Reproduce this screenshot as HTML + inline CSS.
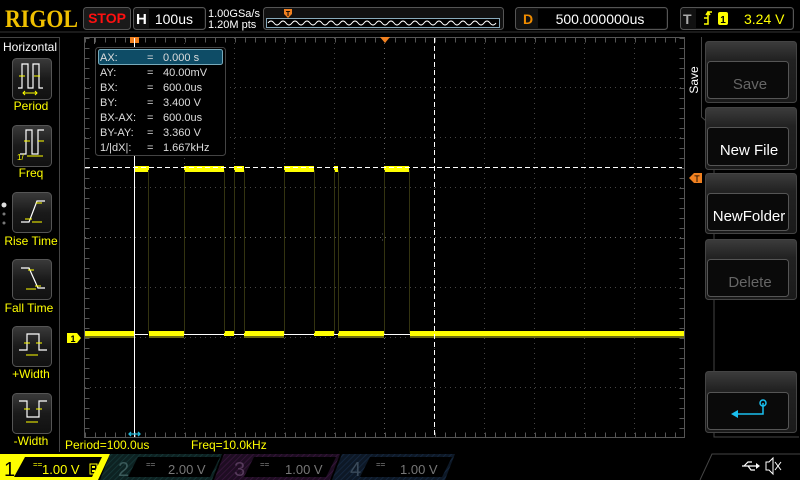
<!DOCTYPE html>
<html><head><meta charset="utf-8"><style>
body{margin:0;background:#000;width:800px;height:480px;overflow:hidden;font-family:"Liberation Sans",sans-serif;}
svg{display:block}
</style></head><body>
<svg width="800" height="480" xmlns="http://www.w3.org/2000/svg" font-family="Liberation Sans, sans-serif">
<rect width="800" height="480" fill="#000"/>
<defs>
<linearGradient id="btn" x1="0" y1="0" x2="0" y2="1"><stop offset="0" stop-color="#3a3a3a"/><stop offset="0.5" stop-color="#1a1a1a"/><stop offset="1" stop-color="#111"/></linearGradient>
<linearGradient id="sk" x1="0" y1="0" x2="0" y2="1"><stop offset="0" stop-color="#3c3c3c"/><stop offset="0.3" stop-color="#222"/><stop offset="1" stop-color="#1a1a1a"/></linearGradient>
<pattern id="hatch2" width="4" height="4" patternUnits="userSpaceOnUse" patternTransform="rotate(45)"><rect width="4" height="4" fill="#0d2222"/><line x1="0" y1="0" x2="0" y2="4" stroke="#163a3a" stroke-width="1.5"/></pattern>
<pattern id="hatch3" width="4" height="4" patternUnits="userSpaceOnUse" patternTransform="rotate(45)"><rect width="4" height="4" fill="#1e0d22"/><line x1="0" y1="0" x2="0" y2="4" stroke="#3a163e" stroke-width="1.5"/></pattern>
<pattern id="hatch4" width="4" height="4" patternUnits="userSpaceOnUse" patternTransform="rotate(45)"><rect width="4" height="4" fill="#0d1826"/><line x1="0" y1="0" x2="0" y2="4" stroke="#162a44" stroke-width="1.5"/></pattern>
</defs>

<!-- top bar -->
<line x1="0" y1="32" x2="800" y2="32" stroke="#333" stroke-width="1"/>
<text x="5" y="27" font-family="Liberation Serif, serif" font-weight="bold" font-size="25" fill="#f0c000" textLength="73" lengthAdjust="spacingAndGlyphs">RIGOL</text>
<rect x="83.5" y="7.5" width="47" height="22" rx="3" fill="#1a1a1a" stroke="#555"/>
<text x="107" y="23" text-anchor="middle" font-size="14" font-weight="bold" fill="#ff1010">STOP</text>
<rect x="133.5" y="7.5" width="72" height="22" rx="3" fill="#111" stroke="#555"/>
<rect x="149" y="9" width="55" height="19" fill="#000"/>
<text x="136" y="24" font-size="15" font-weight="bold" fill="#fff">H</text>
<text x="193" y="24" text-anchor="end" font-size="14" fill="#fff">100us</text>
<text x="208" y="17" font-size="11" fill="#fff">1.00GSa/s</text>
<text x="208" y="28" font-size="11" fill="#fff">1.20M pts</text>
<rect x="263.5" y="7.5" width="240" height="22" rx="3" fill="#111" stroke="#555"/>
<rect x="266.5" y="18.5" width="233" height="9" fill="#000" stroke="#8ab"/>
<path d="M268 23 q3 -4 6 0 t6 0 t6 0 t6 0 t6 0 t6 0 t6 0 t6 0 t6 0 t6 0 t6 0 t6 0 t6 0 t6 0 t6 0 t6 0 t6 0 t6 0 t6 0 t6 0 t6 0 t6 0 t6 0 t6 0 t6 0 t6 0 t6 0 t6 0 t6 0 t6 0 t6 0 t6 0 t6 0 t6 0 t6 0 t6 0 t6 0 t6 0" fill="none" stroke="#fff" stroke-width="1"/>
<path d="M284 9 h8 v5 l-4 4 l-4 -4z" fill="#f08020"/>
<text x="288" y="16" text-anchor="middle" font-size="7" fill="#000" font-weight="bold">T</text>
<rect x="515.5" y="7.5" width="152" height="22" rx="3" fill="#111" stroke="#555"/>
<rect x="538" y="9" width="128" height="19" fill="#000"/>
<text x="523" y="24" font-size="14" font-weight="bold" fill="#f08c00">D</text>
<text x="600" y="24" text-anchor="middle" font-size="14" fill="#fff">500.000000us</text>
<rect x="680.5" y="7.5" width="113" height="22" rx="3" fill="#111" stroke="#555"/>
<rect x="696" y="9" width="96" height="19" fill="#000"/>
<text x="683" y="24" font-size="14" font-weight="bold" fill="#aaa">T</text>
<path d="M704 18 h4 v-6 h4 M706 15 l2 -3 l2 3 M708 18 v6 h-4" fill="none" stroke="#ff0" stroke-width="1.5"/>
<rect x="718" y="12" width="10" height="13" rx="2" fill="#ff0"/>
<text x="723" y="23" text-anchor="middle" font-size="10" font-weight="bold" fill="#000">1</text>
<text x="744" y="24" font-size="14" fill="#ff0">3.24 V</text>

<!-- left panel -->
<path d="M0 37.5 H59.5 V452" fill="none" stroke="#444"/>
<text x="30" y="51" text-anchor="middle" font-size="12" fill="#fff">Horizontal</text>
<g>
<rect x="12.5" y="58.5" width="39" height="41" rx="4" fill="url(#btn)" stroke="#555"/>
<path d="M18 88 h4 v-24 h6 v24 h5 v-24 h6 v24 h4" fill="none" stroke="#fff" stroke-width="1.2"/>
<path d="M19 76 h6 M34 76 h6" stroke="#ff0"/><path d="M23 93 h14 M25 91 l-2 2 2 2 M35 91 l2 2 -2 2" stroke="#ff0" fill="none"/>
<text x="31" y="110" text-anchor="middle" font-size="12" fill="#ff0">Period</text>
<rect x="12.5" y="125.5" width="39" height="41" rx="4" fill="url(#btn)" stroke="#555"/>
<path d="M20 154 h6 v-24 h6 v24 h6 v-24 h6" fill="none" stroke="#fff" stroke-width="1.2"/>
<path d="M24 141 h6 M38 141 h6" stroke="#ff0"/><path d="M27 156 h16" stroke="#ff0"/><text x="17" y="160" font-size="8" fill="#ff0">1/</text>
<text x="31" y="177" text-anchor="middle" font-size="12" fill="#ff0">Freq</text>
<circle cx="4" cy="205" r="2.5" fill="#ddd"/><circle cx="4" cy="214" r="1.5" fill="#777"/><circle cx="4" cy="223" r="1.5" fill="#777"/>
<rect x="12.5" y="192.5" width="39" height="40" rx="4" fill="url(#btn)" stroke="#555"/>
<path d="M21 222 h8 l8 -21 h8" fill="none" stroke="#fff" stroke-width="1.2"/>
<path d="M25 219 h7 M36 203 h6 M32 222 h10" stroke="#ff0"/>
<text x="31" y="245" text-anchor="middle" font-size="12" fill="#ff0">Rise Time</text>
<rect x="12.5" y="259.5" width="39" height="40" rx="4" fill="url(#btn)" stroke="#555"/>
<path d="M21 268 h8 l9 20 h7" fill="none" stroke="#fff" stroke-width="1.2"/>
<path d="M28 270 h6 M35 286 h6 M26 289 h10" stroke="#ff0"/>
<text x="29" y="312" text-anchor="middle" font-size="12" fill="#ff0">Fall Time</text>
<rect x="12.5" y="326.5" width="39" height="40" rx="4" fill="url(#btn)" stroke="#555"/>
<path d="M19 350 h8 v-16 h12 v16 h8" fill="none" stroke="#fff" stroke-width="1.2"/>
<path d="M24 343 h6 M36 343 h6 M26 355 h12" stroke="#ff0"/>
<text x="31" y="378" text-anchor="middle" font-size="12" fill="#ff0">+Width</text>
<rect x="12.5" y="393.5" width="39" height="40" rx="4" fill="url(#btn)" stroke="#555"/>
<path d="M19 401 h8 v16 h12 v-16 h8" fill="none" stroke="#fff" stroke-width="1.2"/>
<path d="M24 409 h6 M36 409 h6 M26 422 h12" stroke="#ff0"/>
<text x="31" y="445" text-anchor="middle" font-size="12" fill="#ff0">-Width</text>
</g>

<!-- grid -->
<rect x="84.5" y="37.5" width="600" height="400" fill="none" stroke="#555"/>
<g stroke="#444" stroke-dasharray="1,4">
<line x1="134.5" y1="38" x2="134.5" y2="437"/><line x1="184.5" y1="38" x2="184.5" y2="437"/><line x1="234.5" y1="38" x2="234.5" y2="437"/><line x1="284.5" y1="38" x2="284.5" y2="437"/><line x1="334.5" y1="38" x2="334.5" y2="437"/><line x1="434.5" y1="38" x2="434.5" y2="437"/><line x1="484.5" y1="38" x2="484.5" y2="437"/><line x1="534.5" y1="38" x2="534.5" y2="437"/><line x1="584.5" y1="38" x2="584.5" y2="437"/><line x1="634.5" y1="38" x2="634.5" y2="437"/>
<line x1="85" y1="87.5" x2="684" y2="87.5"/><line x1="85" y1="137.5" x2="684" y2="137.5"/><line x1="85" y1="187.5" x2="684" y2="187.5"/><line x1="85" y1="287.5" x2="684" y2="287.5"/><line x1="85" y1="337.5" x2="684" y2="337.5"/><line x1="85" y1="387.5" x2="684" y2="387.5"/>
</g>
<g stroke="#666" stroke-dasharray="1,9">
<line x1="384.5" y1="38" x2="384.5" y2="437" stroke-dasharray="1,4"/>
<line x1="85" y1="237.5" x2="684" y2="237.5" stroke-dasharray="1,4"/>
<line x1="94.5" y1="38" x2="94.5" y2="44" stroke-dasharray="none"/>
</g>
<!-- ticks -->
<path d="M85 40 H684 M85 435 H684" stroke="#555" stroke-dasharray="1,9" stroke-width="5"/>
<path d="M87 38 V437 M682 38 V437" stroke="#555" stroke-dasharray="1,9" stroke-width="5"/>
<path d="M382 234 H388 M382 240 H388" stroke="#666" stroke-dasharray="1,9" stroke-width="1"/>
<path d="M380 37 h10 l-5 6z" fill="#f08020"/>
<rect x="130" y="37" width="9" height="6" fill="#f08020"/>

<!-- waveform -->
<g fill="#ffff00">
<rect x="85" y="331" width="49" height="5"/>
<rect x="135" y="166" width="14" height="6"/><rect x="149" y="331" width="35" height="5"/>
<rect x="184" y="166" width="40" height="6"/><rect x="224" y="331" width="10" height="5"/>
<rect x="234" y="166" width="10" height="6"/><rect x="244" y="331" width="40" height="5"/>
<rect x="284" y="166" width="30" height="6"/><rect x="314" y="331" width="20" height="5"/>
<rect x="334" y="166" width="4" height="6"/><rect x="338" y="331" width="46" height="5"/>
<rect x="384" y="166" width="25" height="6"/><rect x="410" y="331" width="274" height="5"/>
</g>
<g fill="#6a6a10"><rect x="85" y="336" width="49" height="2"/><rect x="149" y="336" width="35" height="2"/><rect x="244" y="336" width="40" height="2"/><rect x="338" y="336" width="46" height="2"/><rect x="410" y="336" width="274" height="2"/></g>
<g stroke="#333310" stroke-width="1"><path d="M148.5 170V333 M184.5 170V333 M224.5 170V333 M234.5 170V333 M244.5 170V333 M284.5 170V333 M314.5 170V333 M334.5 170V333 M338.5 170V333 M384.5 170V333 M409.5 170V333"/></g>
<!-- cursors -->
<line x1="85" y1="167.5" x2="684" y2="167.5" stroke="#fff" stroke-dasharray="5,3"/>
<line x1="134.5" y1="38" x2="134.5" y2="437" stroke="#fff"/>
<line x1="434.5" y1="38" x2="434.5" y2="437" stroke="#fff" stroke-dasharray="5,3"/>
<path d="M134 334.5 H148 M184 334.5 H224 M234 334.5 H244 M284 334.5 H314 M334 334.5 H338 M384 334.5 H410" stroke="#fff"/>
<path d="M129 434 h11 M131 432 l-2 2 2 2 M138 432 l2 2 -2 2" stroke="#2bd" fill="none" stroke-width="1.3"/>
<path d="M67 333 h10 l4 5 l-4 5 h-10z" fill="#ff0"/><text x="73" y="342" text-anchor="middle" font-size="9" font-weight="bold" fill="#000">1</text>
<path d="M694 173 h8 v10 h-8 l-5 -5z" fill="#f08020"/><text x="697" y="182" text-anchor="middle" font-size="9" fill="#000">T</text>

<!-- cursor table -->
<rect x="95.5" y="47.5" width="130" height="108" rx="3" fill="#000" stroke="#444"/>
<rect x="98.5" y="49.5" width="124" height="15" rx="2" fill="#0e4c66" stroke="#7ab"/>
<g font-size="11" fill="#ddd">
<text x="100" y="61">AX:</text><text x="147" y="61">=</text><text x="163" y="61">0.000 s</text>
<text x="100" y="76">AY:</text><text x="147" y="76">=</text><text x="163" y="76">40.00mV</text>
<text x="100" y="91">BX:</text><text x="147" y="91">=</text><text x="163" y="91">600.0us</text>
<text x="100" y="106">BY:</text><text x="147" y="106">=</text><text x="163" y="106">3.400 V</text>
<text x="100" y="121">BX-AX:</text><text x="147" y="121">=</text><text x="163" y="121">600.0us</text>
<text x="100" y="136">BY-AY:</text><text x="147" y="136">=</text><text x="163" y="136">3.360 V</text>
<text x="100" y="151">1/|dX|:</text><text x="147" y="151">=</text><text x="163" y="151">1.667kHz</text>
</g>

<!-- measurements -->
<text x="65" y="449" font-size="12" fill="#ff0">Period=100.0us</text>
<text x="191" y="449" font-size="12" fill="#ff0">Freq=10.0kHz</text>

<!-- right panel -->
<path d="M701.5 37 V117 L714 128 V437 H799" fill="none" stroke="#444"/>
<text transform="translate(698,80) rotate(-90)" text-anchor="middle" font-size="12" fill="#fff">Save</text>
<g>
<rect x="705.5" y="41.5" width="91" height="61" rx="3" fill="url(#sk)" stroke="#444"/><rect x="707.5" y="61.5" width="81" height="37" rx="3" fill="#0a0a0a" stroke="#555"/>
<text x="750" y="89" text-anchor="middle" font-size="15" fill="#666">Save</text>
<rect x="705.5" y="107.5" width="91" height="62" rx="3" fill="url(#sk)" stroke="#444"/><rect x="707.5" y="127.5" width="81" height="38" rx="3" fill="#0a0a0a" stroke="#555"/>
<text x="749" y="155" text-anchor="middle" font-size="15" fill="#fff">New File</text>
<rect x="705.5" y="173.5" width="91" height="60" rx="3" fill="url(#sk)" stroke="#444"/><rect x="707.5" y="193.5" width="81" height="37" rx="3" fill="#0a0a0a" stroke="#555"/>
<text x="749" y="221" text-anchor="middle" font-size="15" fill="#fff">NewFolder</text>
<rect x="705.5" y="239.5" width="91" height="60" rx="3" fill="url(#sk)" stroke="#444"/><rect x="707.5" y="259.5" width="81" height="37" rx="3" fill="#0a0a0a" stroke="#555"/>
<text x="750" y="287" text-anchor="middle" font-size="15" fill="#666">Delete</text>
<rect x="705.5" y="371.5" width="91" height="61" rx="3" fill="url(#sk)" stroke="#444"/><rect x="707.5" y="392.5" width="81" height="37" rx="3" fill="#0a0a0a" stroke="#555"/>
<path d="M763 403 v11 h-25" fill="none" stroke="#1ac0f0" stroke-width="1.5"/><circle cx="763" cy="403" r="3" fill="none" stroke="#1ac0f0" stroke-width="1.5"/><path d="M731 414 l7 -4 v8z" fill="#1ac0f0"/>
</g>

<!-- bottom channels -->
<path d="M0 454 H110 L98 480 H0z" fill="#ff0"/>
<path d="M25 457 H102 L92 477 H14z" fill="#000"/>
<text x="4" y="476" font-size="20" fill="#000">1</text>
<text x="33" y="467" font-size="8" fill="#ff0">==</text>
<text x="42" y="474" font-size="13" fill="#ff0">1.00 V</text>
<rect x="90" y="464" width="7" height="10" fill="none" stroke="#ff0"/><rect x="92" y="466" width="3" height="2" fill="#ff0"/><rect x="92" y="470" width="3" height="2" fill="#ff0"/>
<path d="M110 454 H222 L212 480 H100z" fill="url(#hatch2)"/>
<path d="M138 457 H220 L210 477 H128z" fill="#000"/>
<text x="118" y="476" font-size="20" fill="#3a5a5a">2</text>
<text x="146" y="467" font-size="8" fill="#888">==</text><text x="168" y="474" font-size="13" fill="#777">2.00 V</text>
<path d="M224 454 H340 L330 480 H214z" fill="url(#hatch3)"/>
<path d="M254 457 H336 L326 477 H244z" fill="#000"/>
<text x="234" y="476" font-size="20" fill="#553a5a">3</text>
<text x="260" y="467" font-size="8" fill="#888">==</text><text x="285" y="474" font-size="13" fill="#777">1.00 V</text>
<path d="M342 454 H455 L445 480 H332z" fill="url(#hatch4)"/>
<path d="M370 457 H452 L442 477 H360z" fill="#000"/>
<text x="350" y="476" font-size="20" fill="#3a4a5a">4</text>
<text x="376" y="467" font-size="8" fill="#888">==</text><text x="400" y="474" font-size="13" fill="#777">1.00 V</text>
<path d="M700 480 L712 454 H800" fill="none" stroke="#444"/>
<path d="M742 466 h14 M744 466 l4 -4 h4 M748 466 l3 4 h4" stroke="#fff" fill="none" stroke-width="1.2"/><path d="M756 463 l4 3 -4 3z" fill="#fff"/>
<path d="M766 462 h3 l4 -4 v16 l-4 -4 h-3z" fill="none" stroke="#fff"/><path d="M775 462 l6 8 M781 462 l-6 8" stroke="#fff"/>
</svg>
</body></html>
